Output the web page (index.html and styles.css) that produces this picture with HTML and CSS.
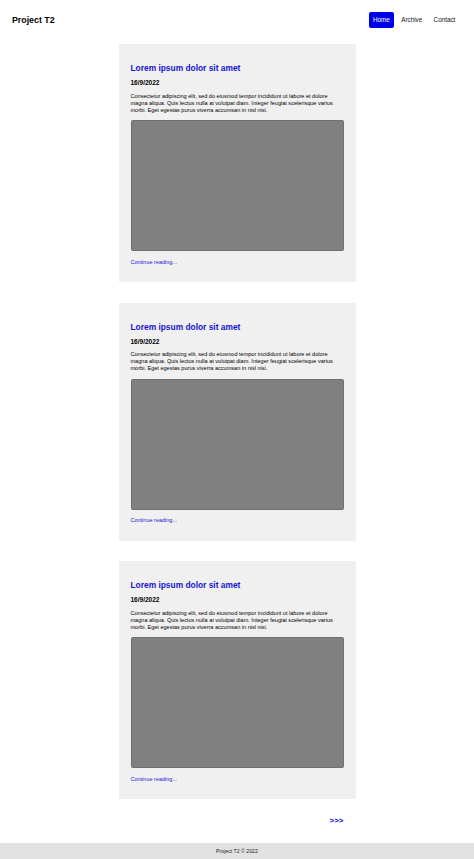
FILE: index.html
```html
<!DOCTYPE html>
<html lang="en">
<head>
<meta charset="utf-8">
<title>Project T2</title>
<link rel="stylesheet" href="styles.css">
</head>
<body>
<header class="site-header">
  <div class="brand">Project T2</div>
  <nav class="nav">
    <a class="nav-link active" href="#">Home</a>
    <a class="nav-link" href="#">Archive</a>
    <a class="nav-link" href="#">Contact</a>
  </nav>
</header>
<main class="posts">
  <article class="card">
    <h2 class="card-title">Lorem ipsum dolor sit amet</h2>
    <div class="card-date">16/9/2022</div>
    <p class="card-text">Consectetur adipiscing elit, sed do eiusmod tempor incididunt ut labore et dolore magna aliqua. Quis lectus nulla at volutpat diam. Integer feugiat scelerisque varius morbi. Eget egestas purus viverra accumsan in nisl nisi.</p>
    <div class="card-image"></div>
    <a class="card-more" href="#">Continue reading...</a>
  </article>
  <article class="card">
    <h2 class="card-title">Lorem ipsum dolor sit amet</h2>
    <div class="card-date">16/9/2022</div>
    <p class="card-text">Consectetur adipiscing elit, sed do eiusmod tempor incididunt ut labore et dolore magna aliqua. Quis lectus nulla at volutpat diam. Integer feugiat scelerisque varius morbi. Eget egestas purus viverra accumsan in nisl nisi.</p>
    <div class="card-image"></div>
    <a class="card-more" href="#">Continue reading...</a>
  </article>
  <article class="card">
    <h2 class="card-title">Lorem ipsum dolor sit amet</h2>
    <div class="card-date">16/9/2022</div>
    <p class="card-text">Consectetur adipiscing elit, sed do eiusmod tempor incididunt ut labore et dolore magna aliqua. Quis lectus nulla at volutpat diam. Integer feugiat scelerisque varius morbi. Eget egestas purus viverra accumsan in nisl nisi.</p>
    <div class="card-image"></div>
    <a class="card-more" href="#">Continue reading...</a>
  </article>
  <div class="pager"><a class="pager-next" href="#">&gt;&gt;&gt;</a></div>
</main>
<footer class="site-footer">Project T2 © 2022</footer>
</body>
</html>
```
FILE: styles.css
```css
html, body {
  margin: 0;
  padding: 0;
}
body {
  font-family: "Liberation Sans", Arial, sans-serif;
  color: #000;
  background: #fff;
  width: 474px;
}
a { text-decoration: none; }

.site-header {
  height: 40px;
  display: flex;
  align-items: center;
  justify-content: space-between;
  padding: 0 15px 0 12px;
}
.brand {
  font-weight: bold;
  font-size: 8.8px;
  line-height: 10px;
}
.nav {
  display: flex;
  align-items: center;
  gap: 4px;
}
.nav-link {
  font-size: 6.3px;
  line-height: 16px;
  padding: 0 3.7px;
  color: #111;
  border-radius: 2px;
}
.nav-link.active {
  background: #0000e8;
  color: #fff;
}

.posts {
  padding-top: 4px;
  display: flex;
  flex-direction: column;
  align-items: center;
  gap: 20.5px;
}
.card {
  width: 237px;
  box-sizing: border-box;
  height: 238px;
  background: #f0f0f0;
  border-radius: 1px;
  padding: 19px 12px 0 12px;
  display: flex;
  flex-direction: column;
}
.card-title {
  margin: 0;
  font-size: 8.4px;
  line-height: 10px;
  font-weight: bold;
  color: #1414d2;
}
.card-date {
  margin-top: 6px;
  font-size: 6.5px;
  line-height: 8px;
  font-weight: bold;
}
.card-text {
  margin: 5.5px 0 0 0;
  font-size: 5.55px;
  line-height: 7px;
}
.card-image {
  margin-top: 6.5px;
  height: 131px;
  background: #808080;
  border: 0.5px solid #707070;
  box-sizing: border-box;
  border-radius: 1.5px;
}
.card-more {
  margin-top: 7.5px;
  font-size: 5.5px;
  line-height: 7px;
  color: #1a1ad6;
}

.pager {
  width: 237px;
  box-sizing: border-box;
  padding: 0 12px;
  margin-top: -20.5px;
  height: 44px;
  display: flex;
  justify-content: flex-end;
  align-items: center;
}
.pager-next {
  font-size: 8px;
  font-weight: bold;
  color: #1414d2;
  line-height: 10px;
}

.site-footer {
  height: 16px;
  line-height: 16px;
  background: #e2e2e2;
  text-align: center;
  font-size: 5.2px;
  color: #222;
}
```
